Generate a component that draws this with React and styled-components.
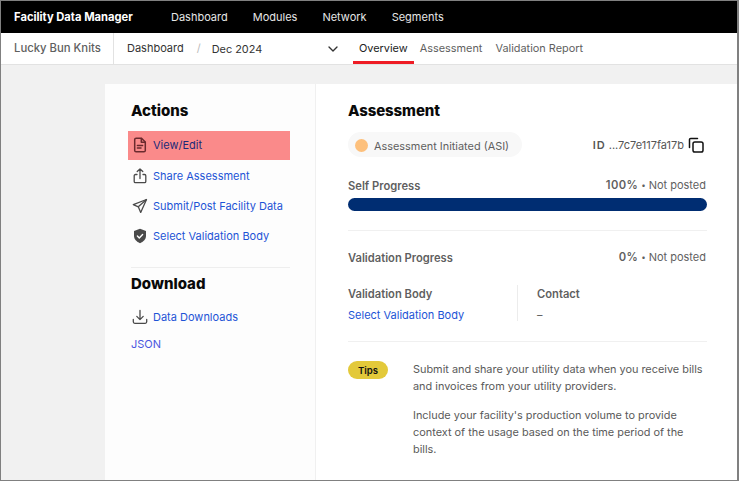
import React from 'react'
import styled, { createGlobalStyle } from 'styled-components'
import { ChevronDown } from 'lucide-react'

const GlobalStyle = createGlobalStyle`
    html, body {
        margin: 0;
        padding: 0;
        height: 100%;
        overflow: hidden;
    }
    body {
        font-family: Inter, 'Liberation Sans', sans-serif;
    }
`

const Frame = styled.div`
    width: 739px;
    height: 481px;
    box-sizing: border-box;
    border: 1px solid #808080;
    border-right-width: 2px;
    background: #f1f1f1;
    overflow: hidden;
`

const TopBar = styled.header`
    height: 32px;
    background: #000;
    display: flex;
    align-items: center;
    padding-left: 13px;
`

const Brand = styled.div`
    font-size: 11.2px;
    font-weight: 700;
    color: #fff;
    width: 157px;
`

const TopNav = styled.nav`
    display: flex;
    gap: 25px;
`

const TopLink = styled.a`
    font-size: 11px;
    color: #e6e6e6;
`

const SubBar = styled.div`
    height: 31px;
    background: #fff;
    border-bottom: 1px solid #e2e2e2;
    display: flex;
`

const Facility = styled.div`
    width: 113px;
    box-sizing: border-box;
    padding: 0 0 1px 13px;
    border-right: 1px solid #e2e2e2;
    display: flex;
    align-items: center;
    font-size: 11.3px;
    font-weight: 500;
    color: #5f5f5f;
`

const Crumbs = styled.div`
    width: 239px;
    box-sizing: border-box;
    padding: 0 12px 1px 13px;
    display: flex;
    align-items: center;
    font-size: 11px;
    color: #333;
    svg {
        margin-top: 2px;
    }
`

const CrumbSlash = styled.span`
    margin: 0 11px 0 13px;
    color: #bbb;
`

const CrumbMonth = styled.span`
    flex: 1;
    padding-top: 1px;
    font-size: 10.9px;
`

const Tabs = styled.div`
    display: flex;
    gap: 1px;
`

const Tab = styled.a`
    padding: ${(p) => (p.$active ? '2px 6px 0' : '2px 7px 0 5px')};
    display: flex;
    align-items: center;
    font-size: 10.9px;
    color: ${(p) => (p.$active ? '#222' : '#5f5f5f')};
    border-bottom: 3px solid ${(p) => (p.$active ? '#ee1c25' : 'transparent')};
`

const Page = styled.main`
    margin: 19px 0 0 104px;
    display: flex;
    background: #fff;
    height: 400px;
`

const Sidebar = styled.aside`
    width: 211px;
    box-sizing: border-box;
    background: #fdfdfd;
    border-right: 1px solid #f0f0f0;
    padding: 18px 25px 0 23px;
`

const SideTitle = styled.h2`
    margin: 0 0 ${(p) => p.$gap}px 3px;
    font-size: 15px;
    line-height: 18px;
    font-weight: 800;
    color: #0a0a0a;
`

const ActionRow = styled.a`
    height: 29px;
    box-sizing: border-box;
    margin-bottom: 1px;
    padding: 0 0 ${(p) => (p.$active ? '2px' : 0)} 4px;
    display: flex;
    align-items: center;
    gap: 5px;
    font-size: 11px;
    color: ${(p) => (p.$active ? '#1a2a78' : '#1d54d6')};
    background: ${(p) => (p.$active ? '#fa8a8a' : 'transparent')};
    svg {
        flex: none;
        width: 16px;
        height: 16px;
    }
`

const SideRule = styled.hr`
    margin: 17px 0 7px 3px;
    border: 0;
    border-top: 1px solid #eee;
`

const JsonLink = styled.a`
    display: block;
    margin: 6px 0 0 3px;
    font-size: 11px;
    color: #4a56e0;
`

const Content = styled.section`
    flex: 1;
    padding: 18px 30px 0 32px;
`

const ContentTitle = styled.h2`
    margin: 0 0 12px;
    font-size: 15px;
    line-height: 18px;
    font-weight: 800;
    letter-spacing: -0.1px;
    color: #0a0a0a;
`

const StatusRow = styled.div`
    display: flex;
    align-items: center;
    justify-content: space-between;
`

const StatusPill = styled.div`
    height: 25px;
    box-sizing: border-box;
    padding: 2px 13px 0 7px;
    border-radius: 13px;
    background: #f8f8f8;
    display: flex;
    align-items: center;
    gap: 6px;
    font-size: 10.9px;
    color: #5f5f5f;
`

const StatusDot = styled.span`
    width: 13px;
    height: 13px;
    border-radius: 50%;
    background: #fdc07c;
`

const IdBlock = styled.div`
    display: flex;
    align-items: center;
    gap: 3px;
    margin-right: 3px;
    font-size: 11px;
    color: #555;
    b {
        font-weight: 600;
        letter-spacing: 1px;
    }
    svg {
        margin-left: 1px;
    }
`

const ProgressHead = styled.div`
    display: flex;
    justify-content: space-between;
    align-items: center;
    margin-top: ${(p) => p.$top}px;
    padding-right: 1px;
    font-size: 11px;
    line-height: 14px;
    color: #5f5f5f;
    b {
        font-size: 11.2px;
        font-weight: 600;
    }
    span b {
        letter-spacing: 0.4px;
    }
`

const Bullet = styled.span`
    margin: 0 3px;
    font-size: 8px;
    position: relative;
    top: -1px;
`

const Track = styled.div`
    height: 13px;
    margin-top: 5px;
    border-radius: 7px;
    background: #e8e8e8;
    overflow: hidden;
`

const Fill = styled.div`
    height: 100%;
    background: #002d72;
`

const Rule = styled.hr`
    margin: ${(p) => p.$margin};
    border: 0;
    border-top: 1px solid #f0f0f0;
`

const BodyGrid = styled.div`
    display: grid;
    grid-template-columns: 169px 1fr;
    margin-top: 20px;
`

const BodyCell = styled.div`
    height: 34px;
    padding: 2px 0 0 ${(p) => (p.$second ? '19px' : 0)};
    border-left: ${(p) => (p.$second ? '1px solid #ececec' : 'none')};
    font-size: 11px;
    line-height: 15px;
    color: #5f5f5f;
    b {
        display: block;
        font-size: 11.2px;
        font-weight: 600;
        margin-bottom: 6px;
    }
    a {
        color: #1d54d6;
    }
`

const TipsRow = styled.div`
    display: grid;
    grid-template-columns: 65px 1fr;
`

const TipsBadge = styled.span`
    width: 40px;
    height: 18px;
    border-radius: 9px;
    background: #e3c93a;
    display: flex;
    align-items: center;
    justify-content: center;
    font-size: 9.6px;
    font-weight: 600;
    color: #111;
`

const TipsText = styled.div`
    font-size: 10.9px;
    line-height: 17px;
    color: #5a5a5a;
    p {
        margin: 0 0 12px;
    }
`

const DocIcon = () => (
    <svg viewBox="0 0 16 16" fill="none" stroke="#6b2a2e" strokeWidth="1.5" strokeLinejoin="round" strokeLinecap="round">
        <path d="M2.700 2.600c0-.8.6-1.400 1.400-1.400h5.400l3.800 3.800v8.400c0 .8-.6 1.400-1.400 1.400H4.100c-.8 0-1.400-.6-1.400-1.400z" />
        <path d="M9.300 1.500v3.700h3.800M5.400 8.400h5.200M5.400 11.100h3.600" />
    </svg>
)

const ShareIcon = () => (
    <svg viewBox="0 0 16 16" fill="none" stroke="#4a4a4a" strokeWidth="1.3" strokeLinecap="round" strokeLinejoin="round">
        <path d="M5 6.500H3.400c-.7 0-1.200.5-1.200 1.200v5.800c0 .7.5 1.200 1.200 1.200h9.200c.7 0 1.200-.5 1.200-1.200V7.700c0-.7-.5-1.200-1.200-1.200H11" />
        <path d="M8 10.500V1M5.200 3.600 8 1l2.800 2.600" />
    </svg>
)

const SendIcon = () => (
    <svg viewBox="0 0 16 16" fill="none" stroke="#4a4a4a" strokeWidth="1.3" strokeLinejoin="round">
        <path d="M14.500 1.500 1.300 6.600l5 2.200 2.400 5.600z" />
        <path d="M14.500 1.500 6.300 8.800" />
    </svg>
)

const ShieldIcon = () => (
    <svg viewBox="0 0 16 16">
        <path fill="#4a4a4a" d="M8 .8 2 3v4.800c0 3.400 2.500 6 6 7.400 3.500-1.400 6-4 6-7.400V3z" />
        <path fill="none" stroke="#fff" strokeWidth="1.400" strokeLinecap="round" strokeLinejoin="round" d="m5.400 8 1.900 1.900 3.300-3.300" />
    </svg>
)

const DownloadIcon = () => (
    <svg viewBox="0 0 16 16" fill="none" stroke="#4a4a4a" strokeWidth="1.3" strokeLinecap="round" strokeLinejoin="round">
        <path d="M8 1.500v9M4.800 7.400 8 10.600l3.200-3.200" />
        <path d="M1.300 10.500v2.300c0 .9.600 1.500 1.500 1.500h10.400c.9 0 1.500-.6 1.500-1.500v-2.300" />
    </svg>
)

const CopyIcon = () => (
    <svg width="16" height="16" viewBox="0 0 16 16" fill="none" stroke="#111" strokeWidth="1.5" strokeLinejoin="round" strokeLinecap="round">
        <rect x="5" y="5" width="10" height="10" rx="1.800" />
        <path d="M1.500 10.500V2.800C1.500 2 2 1.400 2.800 1.400h6.700" />
    </svg>
)

const App = () => (
    <>
        <GlobalStyle />
        <Frame>
            <TopBar>
                <Brand>Facility Data Manager</Brand>
                <TopNav>
                    <TopLink>Dashboard</TopLink>
                    <TopLink>Modules</TopLink>
                    <TopLink>Network</TopLink>
                    <TopLink>Segments</TopLink>
                </TopNav>
            </TopBar>
            <SubBar>
                <Facility>Lucky Bun Knits</Facility>
                <Crumbs>
                    Dashboard
                    <CrumbSlash>/</CrumbSlash>
                    <CrumbMonth>Dec 2024</CrumbMonth>
                    <ChevronDown size={16} color="#333" strokeWidth={2} />
                </Crumbs>
                <Tabs>
                    <Tab $active>Overview</Tab>
                    <Tab>Assessment</Tab>
                    <Tab>Validation Report</Tab>
                </Tabs>
            </SubBar>
            <Page>
                <Sidebar>
                    <SideTitle $gap={11}>Actions</SideTitle>
                    <ActionRow $active><DocIcon />View/Edit</ActionRow>
                    <ActionRow><ShareIcon />Share Assessment</ActionRow>
                    <ActionRow><SendIcon />Submit/Post Facility Data</ActionRow>
                    <ActionRow><ShieldIcon />Select Validation Body</ActionRow>
                    <SideRule />
                    <SideTitle $gap={9}>Download</SideTitle>
                    <ActionRow><DownloadIcon />Data Downloads</ActionRow>
                    <JsonLink>JSON</JsonLink>
                </Sidebar>
                <Content>
                    <ContentTitle>Assessment</ContentTitle>
                    <StatusRow>
                        <StatusPill><StatusDot />Assessment Initiated (ASI)</StatusPill>
                        <IdBlock><b>ID</b> ...7c7e117fa17b <CopyIcon /></IdBlock>
                    </StatusRow>
                    <ProgressHead $top={21}>
                        <b>Self Progress</b>
                        <span><b>100%</b><Bullet>•</Bullet>Not posted</span>
                    </ProgressHead>
                    <Track><Fill style={{ width: '100%' }} /></Track>
                    <Rule $margin="19px 0 0" />
                    <ProgressHead $top={19}>
                        <b>Validation Progress</b>
                        <span><b>0%</b><Bullet>•</Bullet>Not posted</span>
                    </ProgressHead>
                    <BodyGrid>
                        <BodyCell><b>Validation Body</b><a>Select Validation Body</a></BodyCell>
                        <BodyCell $second><b>Contact</b>–</BodyCell>
                    </BodyGrid>
                    <Rule $margin="20px 0 19px" />
                    <TipsRow>
                        <TipsBadge>Tips</TipsBadge>
                        <TipsText>
                            <p>Submit and share your utility data when you receive bills and invoices from your utility providers.</p>
                            <p>Include your facility's production volume to provide context of the usage based on the time period of the bills.</p>
                        </TipsText>
                    </TipsRow>
                </Content>
            </Page>
        </Frame>
    </>
)

export default App
